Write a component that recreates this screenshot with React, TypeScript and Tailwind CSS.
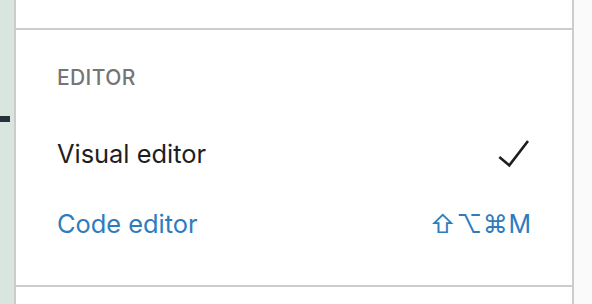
import React from 'react';

const font = { fontFamily: 'Inter, "Noto Sans", sans-serif' };

function Check() {
  return (
    <svg width="32" height="28" viewBox="0 0 32 28" className="text-[#1e1e1e]">
      <path d="M1.3 17 L11.3 25.3 L30 1" fill="none" stroke="currentColor" strokeWidth="2.6" />
    </svg>
  );
}

export default function App() {
  return (
    <div className="flex h-[304px] w-[592px] bg-[#fafafa]" style={font}>
      <div className="w-[16px] shrink-0 border-r-2 border-[#cccccc] bg-[#d9e6df]">
        <div className="mt-[116px] h-[6px] w-[10px] bg-[#28303b]" />
      </div>

      <div className="flex w-[558px] shrink-0 flex-col border-r-2 border-[#cccccc] bg-white">
        <div className="h-[30px] border-b-2 border-[#cccccc]" />

        <div className="border-b-2 border-[#cccccc] pb-[26px] pl-[41px] pr-[40px] pt-[36px]">
          <div className="text-[21px] font-medium uppercase leading-[24px] tracking-[0.4px] text-[#757575]">
            Editor
          </div>
          <div className="mt-[29px] flex h-[70px] items-center justify-between pr-[2px]">
            <span className="text-[25.4px] leading-[32px] text-[#1e1e1e]">Visual editor</span>
            <Check />
          </div>
          <div className="flex h-[70px] items-center justify-between text-[#2e7cbd]">
            <span className="text-[25.4px] leading-[32px]">Code editor</span>
            <span className="text-[25px] leading-[32px] tracking-[0.8px]">⇧⌥⌘M</span>
          </div>
        </div>
      </div>
    </div>
  );
}
